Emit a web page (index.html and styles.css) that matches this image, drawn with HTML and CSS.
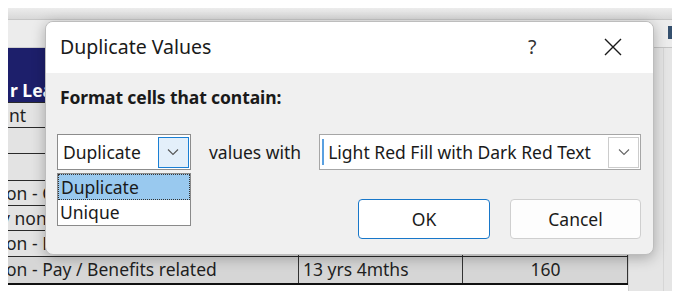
FILE: index.html
```html
<!DOCTYPE html>
<html>
<head>
<meta charset="utf-8">
<link rel="stylesheet" href="styles.css">
</head>
<body>
<div class="screen">
  <div class="sheet">
    <div class="ribbon"></div>
    <div class="pane">
      <div class="grid">
        <div class="colhead"></div>
        <div class="hdr"><div class="hdrtext">r Leave Type</div></div>
        <div class="row r1"><div class="cell a">nt</div><div class="cell b"></div><div class="cell c"></div></div>
        <div class="row r2"><div class="cell a"></div><div class="cell b"></div><div class="cell c"></div></div>
        <div class="row r3"><div class="cell a"></div><div class="cell b"></div><div class="cell c"></div></div>
        <div class="row r1"><div class="cell a"><span class="cut">on - Career related</span></div><div class="cell b"></div><div class="cell c"></div></div>
        <div class="row r1"><div class="cell a"><span class="cut2">y non-compliance</span></div><div class="cell b"></div><div class="cell c"></div></div>
        <div class="row r2"><div class="cell a"><span class="cut">on - Family related</span></div><div class="cell b"></div><div class="cell c"></div></div>
        <div class="row last"><div class="cell a"><span class="cut">on - Pay / Benefits related</span></div><div class="cell b">13 yrs 4mths</div><div class="cell c num">160</div></div>
      </div>
      <div class="side">
        <div class="sidehead"><span class="colmark"></span></div>
        <div class="sidebody"></div>
      </div>
    </div>
  </div>

  <div class="dialog">
    <div class="titlebar">
      <div class="title">Duplicate Values</div>
      <div class="help">?</div>
      <div class="close">
        <svg width="20" height="20" viewBox="0 0 20 20"><path d="M2 2 L18 18 M18 2 L2 18" stroke="#1a1a1a" stroke-width="1.4" fill="none"/></svg>
      </div>
    </div>
    <div class="dbody">
      <div class="label">Format cells that contain:</div>
      <div class="controls">
        <div class="combo combo1">
          <span class="ctext">Duplicate</span>
          <span class="dbtn active">
            <svg width="12" height="8" viewBox="0 0 12 8"><path d="M1 1.5 L6 6.5 L11 1.5" stroke="#555" stroke-width="1.1" fill="none"/></svg>
          </span>
        </div>
        <div class="vw">values with</div>
        <div class="combo combo2">
          <span class="caret"></span>
          <span class="ctext">Light Red Fill with Dark Red Text</span>
          <span class="dbtn">
            <svg width="12" height="8" viewBox="0 0 12 8"><path d="M1 1.5 L6 6.5 L11 1.5" stroke="#666" stroke-width="1.1" fill="none"/></svg>
          </span>
        </div>
      </div>
      <div class="buttons">
        <div class="btn ok">OK</div>
        <div class="btn">Cancel</div>
      </div>
    </div>
  </div>

  <div class="dlist">
    <div class="item sel">Duplicate</div>
    <div class="item">Unique</div>
  </div>
</div>
</body>
</html>
```

FILE: styles.css
```css
* { box-sizing: border-box; }
html, body { margin: 0; padding: 0; background: #ffffff; }
body { font-family: "Noto Sans", "Open Sans", sans-serif; color: #1a1a1a; }

.screen { position: relative; width: 678px; height: 291px; overflow: hidden; background: #fff; }

.sheet {
  margin-left: 8px;
  padding-top: 8px;
  width: 664px;
  display: flex;
  flex-direction: column;
}
.ribbon {
  height: 12px;
  background: linear-gradient(#ececec, #d8d8d8);
  border-bottom: 1px solid #c6c6c6;
}
.pane { display: flex; height: 271px; }
.grid { width: 620px; display: flex; flex-direction: column; }
.side { width: 44px; display: flex; flex-direction: column; }
.sidehead { height: 28px; background: #ececec; border-bottom: 1px solid #c4c4c4; position: relative; }
.colmark { position: absolute; right: 0; top: 6px; width: 4px; height: 13px; background: #35506e; }
.sidebody { flex: 1; background: #e5e5e5; border-left: 1px solid #cfcfcf; position: relative; }
.sidebody::after { content: ""; position: absolute; left: 34px; top: 0; bottom: 0; width: 1px; background: #d6d6d6; }

.colhead { height: 28px; background: #ececec; border-bottom: 1px solid #cfcfcf; }
.hdr {
  height: 54px;
  background: #1d1f6b;
  padding-top: 33px;
}
.hdrtext { color: #fff; font-weight: bold; font-size: 17.5px; line-height: 18px; white-space: nowrap; padding-left: 2px; }

.row { display: flex; border-top: 1px solid #2a2a2a; background: #e3e3e3; }
.row.r1 { height: 25px; }
.row.r2 { height: 26px; }
.row.r3 { height: 27px; }
.row.last { height: 29px; border-bottom: 2px solid #111; background: #d6d6d6; }
.cell {
  height: 100%;
  font-size: 17.5px;
  line-height: 24px;
  padding-left: 1px;
  overflow: hidden;
  white-space: nowrap;
  color: #1f1f1f;
}
.cell.a { width: 290px; }
.cell.b { width: 164px; border-left: 1px solid #333; padding-left: 4px; }
.cell.c { width: 166px; border-left: 1px solid #333; border-right: 1px solid #333; }
.cell.num { text-align: center; }
.cut { margin-left: -3px; display: inline-block; }
.cut2 { margin-left: -8px; display: inline-block; }

/* Dialog */
.dialog {
  position: absolute;
  left: 45px;
  top: 21px;
  width: 609px;
  height: 234px;
  border-radius: 8px;
  border: 1px solid #bdbdbd;
  background: #f0f0f0;
  box-shadow: 0 3px 14px rgba(0,0,0,0.28);
  overflow: hidden;
  display: flex;
  flex-direction: column;
}
.titlebar {
  height: 51px;
  background: #ffffff;
  display: flex;
  align-items: center;
  padding-left: 14px;
}
.title { font-size: 19.5px; flex: 1; padding-bottom: 2px; }
.help { font-size: 19.5px; color: #333; width: 75px; padding-bottom: 2px; }
.close { width: 50px; display: flex; align-items: center; padding-bottom: 2px; }

.dbody { flex: 1; padding: 13px 12px 0 11px; display: flex; flex-direction: column; }
.label { font-weight: bold; font-size: 17.5px; padding-left: 3px; height: 22px; line-height: 22px; letter-spacing: -0.1px; }
.controls { display: flex; align-items: center; margin-top: 26px; height: 36px; }
.combo {
  height: 36px;
  background: #fff;
  border: 1px solid #a6a6a6;
  display: flex;
  align-items: center;
}
.combo1 { width: 134px; padding-left: 5px; border-color: #8c8c8c; }
.combo2 { width: 322px; padding-left: 2px; }
.ctext { font-size: 17.5px; flex: 1; white-space: nowrap; overflow: hidden; }
.caret { width: 2px; height: 26px; background: #5aa0e0; margin-right: 4px; flex: none; }
.dbtn {
  width: 31px;
  height: 31px;
  margin-right: 1px;
  border: 1px solid #cccccc;
  background: #fff;
  display: flex;
  align-items: center;
  justify-content: center;
  flex: none;
}
.dbtn.active { border-color: #1a7fd4; background: #e3effa; }
.vw { font-size: 17.5px; margin: 0 18px 0 18px; white-space: nowrap; }

.buttons { display: flex; justify-content: flex-end; gap: 20px; margin-top: 29px; }
.btn {
  width: 131px;
  height: 40px;
  border: 1px solid #cfcfcf;
  border-radius: 4px;
  background: #fdfdfd;
  font-size: 17.5px;
  display: flex;
  align-items: center;
  justify-content: center;
}
.btn.ok { width: 132px; border-color: #1877c9; background: #fff; }

/* dropdown list */
.dlist {
  position: absolute;
  left: 57px;
  top: 173px;
  width: 134px;
  height: 53px;
  background: #fff;
  border: 1px solid #8a8a8a;
}
.item { height: 26px; font-size: 17.5px; line-height: 24px; padding-left: 2px; }
.item.sel { background: #99c9ef; border: 1px dotted #333; }
```
